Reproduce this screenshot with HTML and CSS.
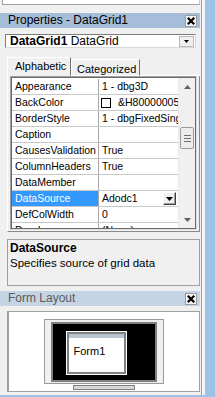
FILE: index.html
```html
<!DOCTYPE html>
<html>
<head>
<meta charset="utf-8">
<link rel="stylesheet" href="styles.css">
</head>
<body>
<div class="screen">
  <div class="main">
    <div class="panel">
      <div class="topbox"></div>
      <div class="titlebar active">
        <span class="title-text">Properties - DataGrid1</span>
        <span class="close"><svg width="8" height="8" viewBox="0 0 8 8"><path d="M0.8 0.8L7.2 7.2M7.2 0.8L0.8 7.2" stroke="#000" stroke-width="2.2"/></svg></span>
      </div>
      <div class="combo">
        <span class="combo-text"><b>DataGrid1</b> DataGrid</span>
        <span class="combo-btn"><svg width="5" height="3" viewBox="0 0 5 3"><path d="M0 0H5L2.5 3Z" fill="#000"/></svg></span>
      </div>
      <div class="tabs">
        <div class="tab sel">Alphabetic</div>
        <div class="tab">Categorized</div>
        <div class="tab-fill"></div>
      </div>
      <div class="tabpage">
        <div class="grid">
          <div class="grid-in">
            <div class="rows">
              <div class="row"><div class="name">Appearance</div><div class="val">1 - dbg3D</div></div>
              <div class="row"><div class="name">BackColor</div><div class="val"><span class="swatch"></span>&amp;H80000005&amp;</div></div>
              <div class="row"><div class="name">BorderStyle</div><div class="val">1 - dbgFixedSingle</div></div>
              <div class="row"><div class="name">Caption</div><div class="val"></div></div>
              <div class="row"><div class="name">CausesValidation</div><div class="val">True</div></div>
              <div class="row"><div class="name">ColumnHeaders</div><div class="val">True</div></div>
              <div class="row"><div class="name">DataMember</div><div class="val"></div></div>
              <div class="row"><div class="name selname">DataSource</div><div class="val editval"><span class="edit-text">Adodc1</span><span class="drop"><svg width="7" height="4" viewBox="0 0 7 4"><path d="M0 0H7L3.5 4Z" fill="#000"/></svg></span></div></div>
              <div class="row"><div class="name">DefColWidth</div><div class="val">0</div></div>
              <div class="row"><div class="name">DragIcon</div><div class="val">(None)</div></div>
            </div>
            <div class="vscroll">
              <div class="sbtn"><svg width="7" height="4" viewBox="0 0 7 4"><path d="M0 4H7L3.5 0Z" fill="#606060"/></svg></div>
              <div class="track">
                <div class="thumb"><span></span><span></span><span></span></div>
              </div>
              <div class="sbtn"><svg width="7" height="4" viewBox="0 0 7 4"><path d="M0 0H7L3.5 4Z" fill="#606060"/></svg></div>
            </div>
          </div>
        </div>
      </div>
      <div class="desc">
        <div class="desc-name">DataSource</div>
        <div class="desc-text">Specifies source of grid data</div>
      </div>
      <div class="titlebar inactive">
        <span class="title-text">Form Layout</span>
        <span class="close"><svg width="8" height="8" viewBox="0 0 8 8"><path d="M0.8 0.8L7.2 7.2M7.2 0.8L0.8 7.2" stroke="#000" stroke-width="2.2"/></svg></span>
      </div>
      <div class="layout">
        <div class="monitor">
          <div class="screenarea">
            <div class="form">
              <div class="form-in">
                <div class="form-title"></div>
                <div class="form-body">Form1</div>
              </div>
            </div>
          </div>
        </div>
        <div class="stand"></div>
      </div>
    </div>
    <div class="edge"></div>
  </div>
</div>
</body>
</html>
```
FILE: styles.css
```css
* { box-sizing: border-box; }
html, body { margin: 0; padding: 0; }
body {
  font-family: "Liberation Sans", Arial, sans-serif;
  font-size: 11px;
  color: #000;
  background: #9cc2e8;
}
.screen {
  width: 215px;
  height: 397px;
  background: #9cc2e8;
  overflow: hidden;
}
.main {
  display: flex;
  height: 395px;
}
.panel {
  width: 201px;
  background: #f0f0f0;
  display: flex;
  flex-direction: column;
}
.edge {
  width: 4px;
  background: #f4f4f4;
  border-left: 1px solid #a0a0a0;
}
.topbox {
  margin-left: 2px;
  width: 198px;
  height: 5px;
  background: #fff;
  border-left: 1px solid #a0a0a0;
  border-right: 1px solid #c8c8c8;
  border-bottom: 1px solid #a0a0a0;
}
.titlebar {
  margin-top: 8px;
  width: 200px;
  height: 15px;
  display: flex;
  align-items: center;
  justify-content: space-between;
  padding-left: 8px;
  padding-right: 3px;
  font-size: 12px;
  line-height: 15px;
}
.titlebar.active { background: #a6bdd9; color: #000; }
.titlebar.inactive { background: #c5d4e5; color: #5a5a5a; margin-top: 5px; }
.close {
  width: 12px;
  height: 12px;
  background: #f6f6f6;
  border: 1px solid #9a9a9a;
  display: flex;
  align-items: center;
  justify-content: center;
}
.close svg { display: block; }
.combo {
  margin-top: 6px;
  margin-left: 5px;
  width: 191px;
  height: 14px;
  background: #fff;
  border-top: 1px solid #7a7a7a;
  border-left: 1px solid #7a7a7a;
  border-right: 1px solid #d8d8d8;
  border-bottom: 1px solid #d8d8d8;
  display: flex;
  align-items: center;
  justify-content: space-between;
  font-size: 12px;
  line-height: 12px;
  padding-left: 4px;
  padding-right: 1px;
}
.combo-text { white-space: nowrap; }
.combo-btn {
  width: 15px;
  height: 11px;
  background: #f0f0f0;
  border: 1px solid #b8b8b8;
  display: flex;
  align-items: center;
  justify-content: center;
}
.combo-btn svg { display: block; }
.tabs {
  margin-top: 9px;
  margin-left: 7px;
  width: 193px;
  height: 19px;
  display: flex;
  align-items: flex-end;
}
.tab {
  height: 17px;
  padding: 0 5px;
  line-height: 17px;
  font-size: 11px;
  border-left: 1px solid #fff;
  border-top: 1px solid #fff;
  border-right: 1px solid #707070;
  border-bottom: 1px solid #fff;
  white-space: nowrap;
}
.tab.sel {
  height: 19px;
  width: 64px;
  padding-left: 7px;
  line-height: 16px;
  border-bottom: 1px solid #f0f0f0;
}
.tab:not(.sel) { width: 69px; padding-left: 5px; line-height: 18px; }
.tab-fill {
  flex: 1;
  height: 1px;
  border-bottom: 1px solid #fff;
}
.tabpage {
  margin-left: 7px;
  width: 193px;
  border-left: 1px solid #fff;
  border-right: 1px solid #8a8a8a;
  border-bottom: 1px solid #8a8a8a;
  padding: 0 2px 1px 2px;
}
.grid {
  width: 187px;
  height: 154px;
  border: 1px solid #a0a0a0;
  border-right-color: #e0e0e0;
  border-bottom-color: #e0e0e0;
}
.grid-in {
  width: 185px;
  height: 152px;
  border: 1px solid #696969;
  display: flex;
  overflow: hidden;
  background: #fff;
}
.rows {
  width: 166px;
  padding-top: 1px;
  overflow: hidden;
}
.row {
  display: flex;
  height: 16px;
  border-bottom: 1px solid #c8c8c8;
  line-height: 15px;
  font-size: 10.5px;
}
.name {
  width: 87px;
  padding-left: 3px;
  border-right: 1px solid #a8a8a8;
  white-space: nowrap;
  overflow: hidden;
}
.selname { background: #3399ff; color: #fff; }
.val {
  width: 79px;
  padding-left: 3px;
  white-space: nowrap;
  overflow: hidden;
  display: flex;
  align-items: center;
}
.swatch {
  display: inline-block;
  width: 10px;
  height: 10px;
  background: #fff;
  border: 1px solid #000;
  margin-left: -1px;
  margin-right: 7px;
  flex: none;
}
.editval { justify-content: space-between; padding-right: 2px; }
.drop {
  width: 13px;
  height: 13px;
  background: #f0f0f0;
  border-top: 1px solid #fff;
  border-left: 1px solid #fff;
  border-right: 1px solid #404040;
  border-bottom: 1px solid #404040;
  box-shadow: inset -1px -1px 0 #a0a0a0;
  display: flex;
  align-items: center;
  justify-content: center;
  flex: none;
}
.drop svg { display: block; }
.vscroll {
  width: 17px;
  background: #f0f0f0;
  border-left: 1px solid #e8e8e8;
  display: flex;
  flex-direction: column;
}
.sbtn {
  height: 17px;
  display: flex;
  align-items: center;
  justify-content: center;
}
.sbtn svg { display: block; }
.track { flex: 1; padding-top: 32px; }
.thumb {
  margin-left: 1px;
  width: 14px;
  height: 22px;
  background: #ececec;
  border: 1px solid #9a9a9a;
  border-radius: 2px;
  display: flex;
  flex-direction: column;
  align-items: center;
  justify-content: center;
  gap: 2px;
}
.thumb span {
  width: 7px;
  height: 1px;
  background: #707070;
}
.desc {
  margin-top: 7px;
  margin-left: 7px;
  width: 193px;
  height: 47px;
  border: 1px solid #a0a0a0;
  padding: 1px 0 0 2px;
  line-height: 15px;
}
.desc-name { font-weight: bold; font-size: 12px; }
.desc-text { font-size: 11.5px; }
.layout {
  margin-top: 5px;
  margin-left: 7px;
  width: 193px;
  height: 81px;
  background: #fff;
  border: 1px solid #a0a0a0;
  border-left: 2px solid #a0a0a0;
  display: flex;
  flex-direction: column;
  align-items: center;
  padding-top: 7px;
  padding-right: 1px;
}
.monitor {
  width: 120px;
  height: 65px;
  background: #f0f0f0;
  border: 1px solid #9a9a9a;
  padding: 2px 6px 1px 6px;
}
.screenarea {
  width: 106px;
  height: 60px;
  background: #000;
  border: 2px solid #808080;
  padding: 7px 0 0 13px;
}
.form {
  width: 61px;
  height: 44px;
  border: 1px solid #fff;
}
.form-in {
  height: 100%;
  border: 2px solid #808080;
  background: #fff;
}
.form-title {
  height: 4px;
  background: #b8c4d0;
}
.form-body {
  padding-left: 5px;
  padding-top: 7px;
  font-size: 11px;
  line-height: 13px;
}
.stand {
  margin-top: 1px;
  margin-left: 1px;
  width: 62px;
  height: 5px;
  background: #d8d8d8;
  border: 1px solid #808080;
}
```
